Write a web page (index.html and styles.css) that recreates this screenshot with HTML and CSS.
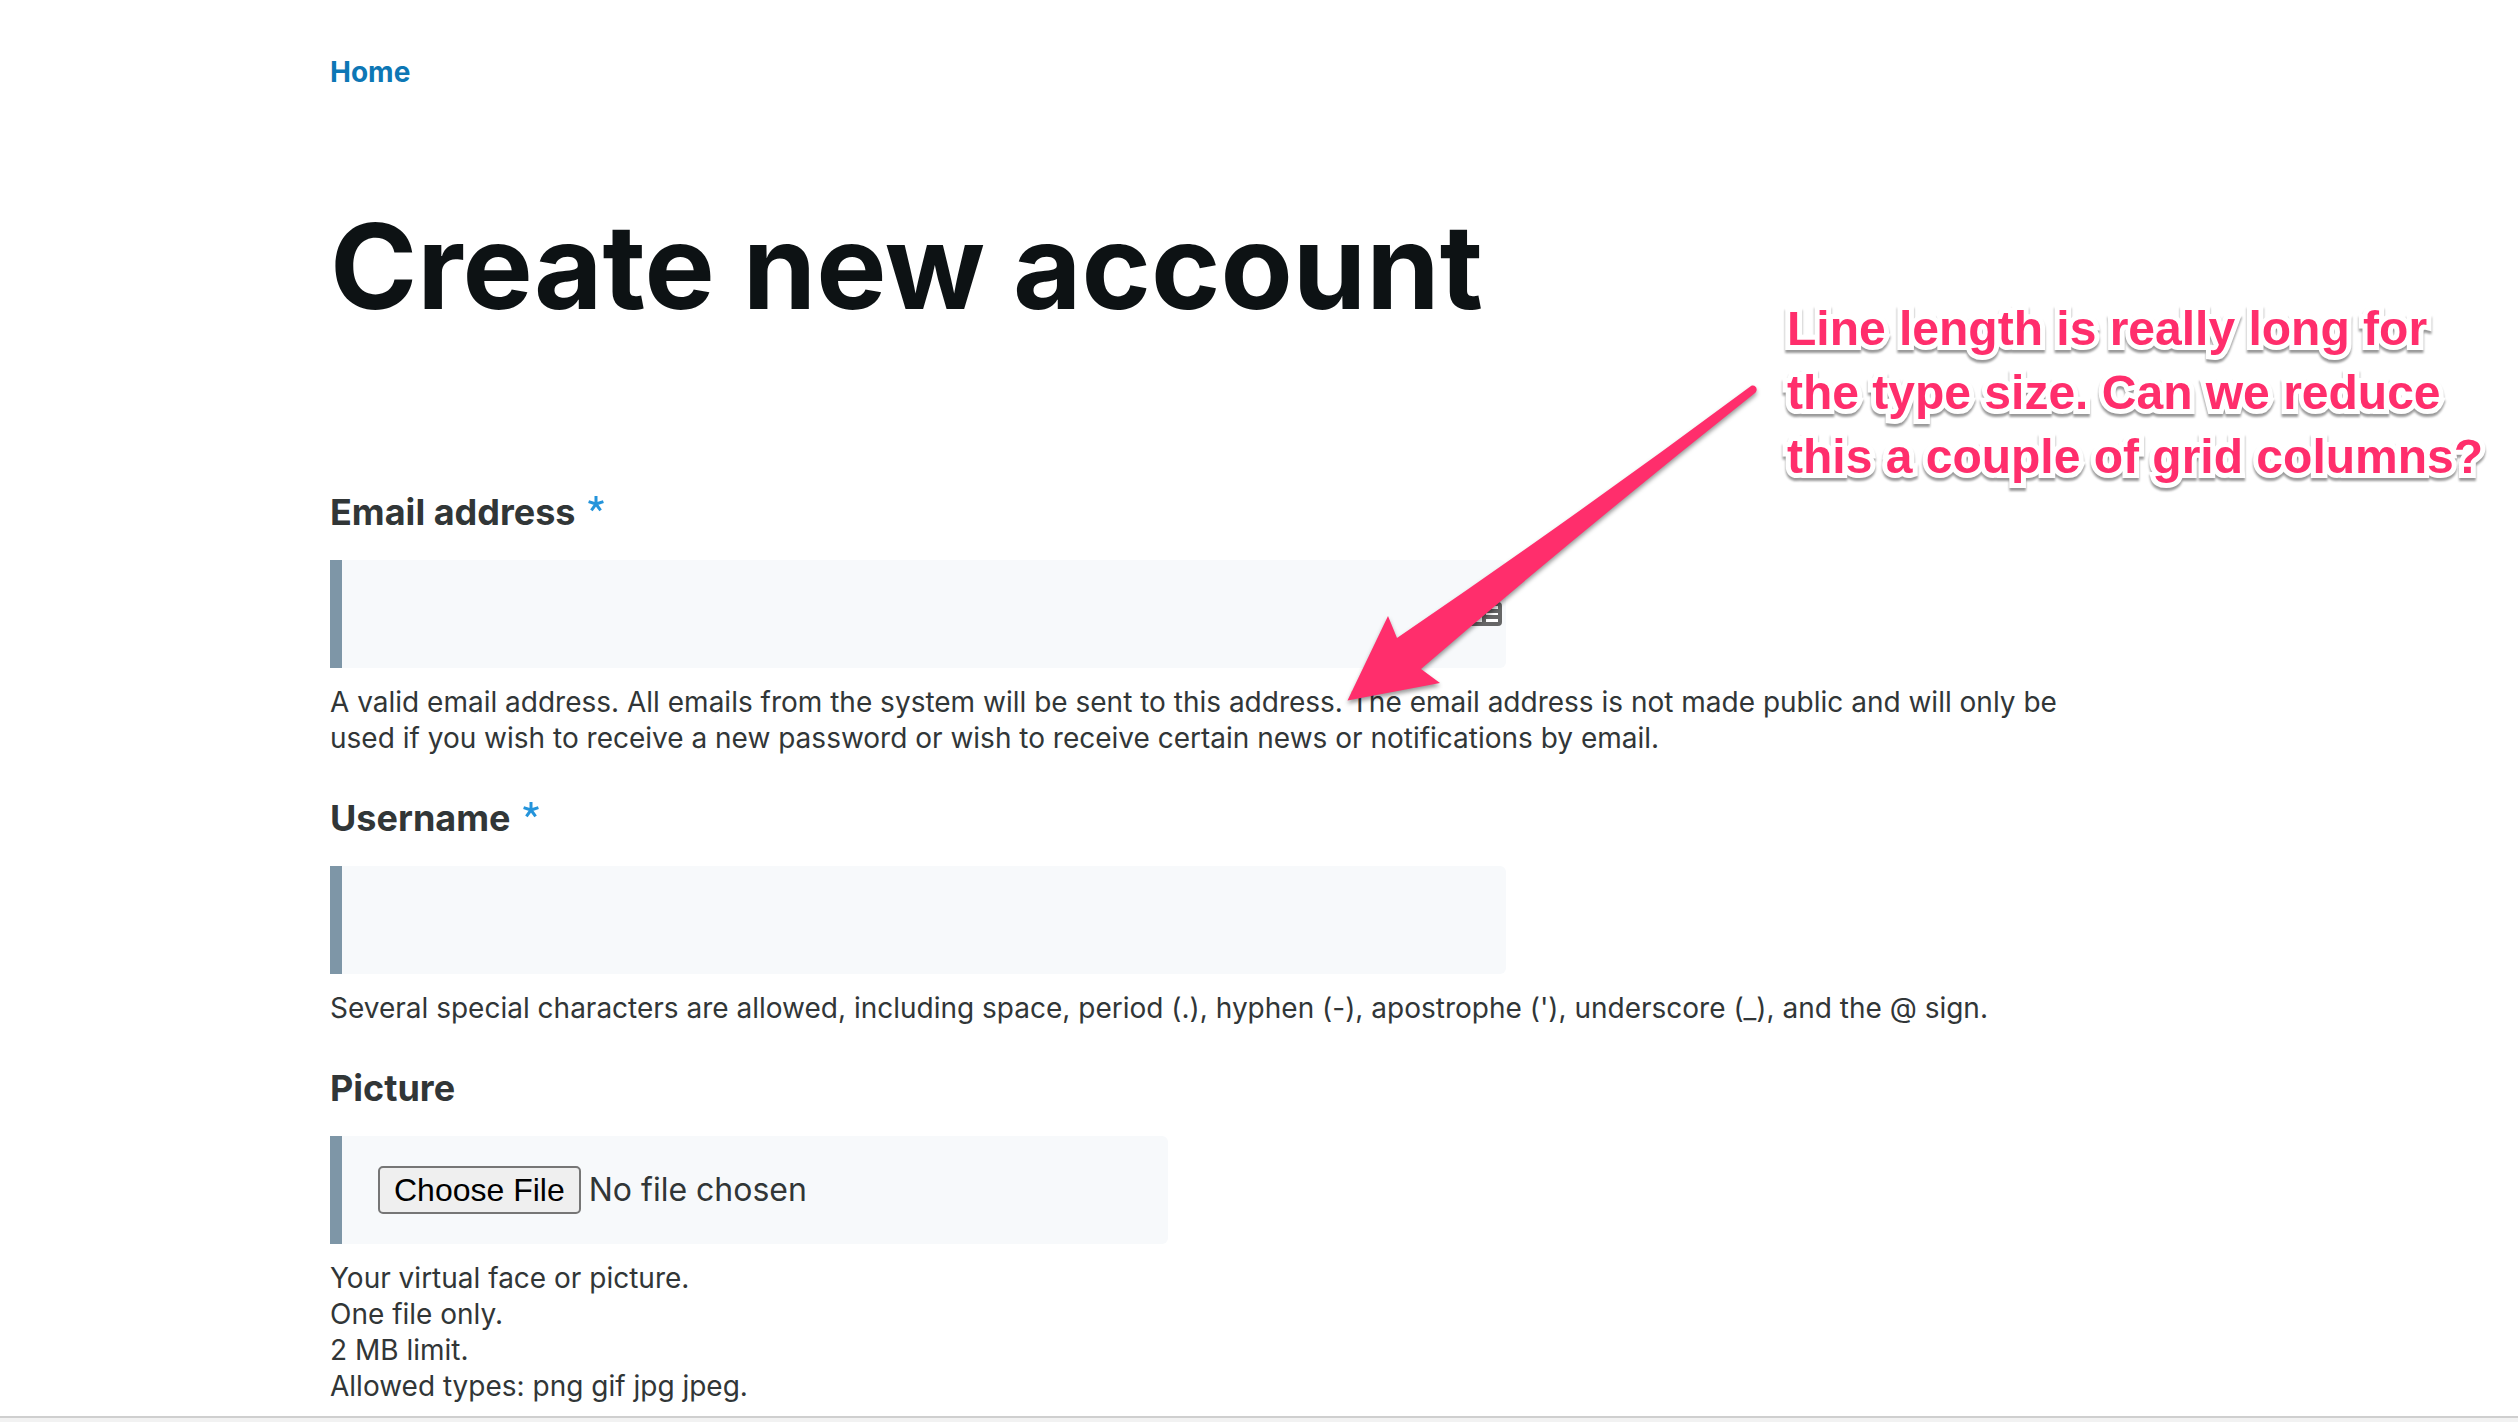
FILE: index.html
```html
<!DOCTYPE html>
<html lang="en">
<head>
<meta charset="utf-8">
<title>Create new account</title>
<link rel="stylesheet" href="styles.css">
</head>
<body>
<main class="page">
  <nav class="breadcrumb" aria-label="Breadcrumb"><a href="#">Home</a></nav>
  <h1 class="title">Create new account</h1>
  <form class="form">
    <div class="item">
      <label class="label" for="mail">Email address
        <svg class="required" viewBox="0 0 16 16" aria-hidden="true"><path d="M8 8V0M8 8L.6 5.6M8 8l7.4-2.4M8 8l-4.6 6.4M8 8l4.6 6.4"/></svg>
      </label>
      <div class="control">
        <input class="field" id="mail" type="email" required>
        <svg class="autofill" viewBox="0 0 40 24" aria-hidden="true">
          <rect x="2" y="2" width="36" height="20" rx="2"/>
          <path d="M22 2v20M22 9h16M22 15h16"/>
          <path class="person" d="M7 17c0-8 11-8 11 0zM12 5a3 3 0 1 1 0 6 3 3 0 0 1 0-6z"/>
        </svg>
      </div>
      <p class="description">A valid email address. All emails from the system will be sent to this address. The email address is not made public and will only be used if you wish to receive a new password or wish to receive certain news or notifications by email.</p>
    </div>
    <div class="item">
      <label class="label" for="name">Username
        <svg class="required" viewBox="0 0 16 16" aria-hidden="true"><path d="M8 8V0M8 8L.6 5.6M8 8l7.4-2.4M8 8l-4.6 6.4M8 8l4.6 6.4"/></svg>
      </label>
      <div class="control"><input class="field" id="name" type="text" required></div>
      <p class="description">Several special characters are allowed, including space, period (.), hyphen (-), apostrophe ('), underscore (_), and the @ sign.</p>
    </div>
    <div class="item">
      <label class="label" for="picture">Picture</label>
      <div class="control control-file"><input class="field field-file" id="picture" type="file"></div>
      <p class="description">Your virtual face or picture.<br>One file only.<br>2 MB limit.<br>Allowed types: png gif jpg jpeg.</p>
    </div>
  </form>
</main>
<div class="bottom-bar"></div>
<svg class="arrow" viewBox="0 0 420 324" aria-hidden="true">
  <path d="M7.500 314.500L48 230l9 22Q236 130 411 0C415-2 419 3 415 7Q240 146 81 283l19 14z"/>
</svg>
<p class="note">Line length is really long for<br>the type size. Can we reduce<br>this a couple of grid columns?</p>
</body>
</html>
```
FILE: styles.css
```css
* { box-sizing: border-box; }

body {
  margin: 0;
  position: relative;
  background: #fff;
  color: #313637;
  font: 28px/36px Inter, "Noto Sans", sans-serif;
}

.page { padding: 54px 330px 12px; }

.breadcrumb a {
  color: #0d77b5;
  font-weight: 700;
  text-decoration: none;
}

.title {
  margin: 104px 0 150px;
  color: #0d1214;
  font-size: 118px;
  line-height: 144px;
  font-weight: 700;
}

.form {
  display: flex;
  flex-direction: column;
  gap: 38px;
}

.label {
  display: flex;
  gap: 12px;
  margin-bottom: 24px;
  font-size: 36px;
  line-height: 48px;
  font-weight: 700;
}

.required {
  width: 16px;
  height: 16px;
  margin-top: 8px;
  fill: none;
  stroke: #2494db;
  stroke-width: 3;
}

.control {
  position: relative;
  max-width: 1176px;
}

.control-file { max-width: 838px; }

.field {
  display: block;
  width: 100%;
  height: 108px;
  padding: 0 36px;
  border: 0;
  border-left: 12px solid #7e96a7;
  border-radius: 0 6px 6px 0;
  background: #f7f9fb;
  color: inherit;
  font: 32px/48px Inter, "Noto Sans", sans-serif;
}

.field-file { padding-block: 30px; }

.field::file-selector-button {
  height: 48px;
  margin: 0 8px 0 0;
  padding: 0 14px;
  border: 2px solid #767676;
  border-radius: 5px;
  background: #efefef;
  color: #000;
  font: 32px/44px "Liberation Sans", Arial, sans-serif;
}

.autofill {
  position: absolute;
  top: 42px;
  right: 4px;
  width: 40px;
  height: 24px;
  fill: #fff;
  stroke: #666;
  stroke-width: 4;
}

.autofill .person { fill: #666; stroke: none; }

.description {
  max-width: 1780px;
  margin: 16px 0 0;
}

.bottom-bar {
  height: 6px;
  border-top: 2px solid #cfcfcf;
  background: #f2f2f2;
}

.arrow {
  position: absolute;
  top: 386px;
  left: 1340px;
  width: 420px;
  height: 324px;
  overflow: visible;
  fill: #ff2e6c;
  filter: drop-shadow(0 3px 2px rgb(0 0 0 / 40%));
}

.note {
  position: absolute;
  top: 297px;
  left: 1787px;
  margin: 0;
  color: #ff2e6c;
  font: 700 48px/64px "Liberation Sans", Arial, sans-serif;
  white-space: nowrap;
  -webkit-text-stroke: 10px #fff;
  paint-order: stroke fill;
  filter: drop-shadow(0 3px 1px rgb(0 0 0 / 40%));
}
```
